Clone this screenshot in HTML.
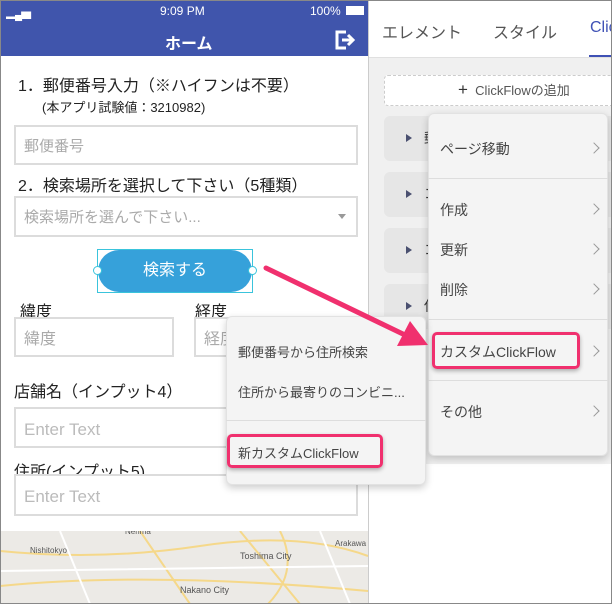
<!DOCTYPE html>
<html><head><meta charset="utf-8"><style>
*{box-sizing:border-box;margin:0;padding:0}
body{width:612px;height:604px;position:relative;overflow:hidden;background:#fff;font-family:"Liberation Sans","Noto Sans CJK JP",sans-serif;color:#222}
.a{position:absolute}
.inp{position:absolute;border:2px solid #dcdcdc;background:#fff;color:#aaa;font-size:15px;padding-left:8px;display:flex;align-items:center}
.lbl{position:absolute;font-size:15px;color:#222}
.row{position:absolute;left:384px;width:240px;height:45px;background:#e6e6e6;border-radius:6px;font-size:14px;color:#333;padding:12px 0 0 26px}
.row:before{content:"";position:absolute;left:22px;top:18px;border-left:6px solid #4a5070;border-top:4px solid transparent;border-bottom:4px solid transparent}
.row span{position:absolute;left:40px;top:12px}
.mi{position:absolute;font-size:14px;color:#444}
.chev{position:absolute;width:8px;height:8px;border-right:1.3px solid #999;border-top:1.3px solid #999;transform:rotate(45deg)}
.sep{position:absolute;height:1px;background:#ddd}
.pink{position:absolute;border:3px solid #f0306e;border-radius:5px;box-shadow:0 2px 4px rgba(0,0,0,.3)}
</style></head><body>
<div class="a" style="left:0;top:0;width:368px;height:56px;background:#4055ac"></div>
<div class="a" style="left:6px;top:6px;color:#fff;font-size:10px;letter-spacing:-1px">▂▄▆</div>
<div class="a" style="left:160px;top:4px;color:#fff;font-size:12px">9:09 PM</div>
<div class="a" style="left:310px;top:4px;color:#fff;font-size:12px">100%</div>
<div class="a" style="left:346px;top:6px;width:18px;height:9px;border:1px solid #fff;background:#fff"></div>
<div class="a" style="left:165px;top:30px;color:#fff;font-size:16px;font-weight:bold">ホーム</div>
<svg class="a" style="left:334px;top:29px" width="22" height="22" viewBox="0 0 22 22"><path d="M12 3H3v16h9" fill="none" stroke="#fff" stroke-width="3"/><path d="M8 11h9M14 6l5 5-5 5" fill="none" stroke="#fff" stroke-width="3"/></svg>
<div class="lbl" style="left:18px;top:72px;font-size:16px">1．郵便番号入力（※ハイフンは不要）</div>
<div class="a" style="left:42px;top:97px;font-size:13px">(本アプリ試験値：3210982)</div>
<div class="inp" style="left:14px;top:125px;width:344px;height:40px">郵便番号</div>
<div class="lbl" style="left:18px;top:172px;font-size:16px">2．検索場所を選択して下さい（5種類）</div>
<div class="inp" style="left:14px;top:196px;width:344px;height:41px">検索場所を選んで下さい...</div>
<div class="a" style="left:338px;top:214px;border-top:5px solid #999;border-left:4px solid transparent;border-right:4px solid transparent"></div>
<div class="a" style="left:97px;top:249px;width:156px;height:44px;border:1px solid #3ac4dc"></div>
<div class="a" style="left:98px;top:250px;width:154px;height:42px;background:#36a1da;border-radius:21px;color:#fff;font-size:16px;text-align:center;line-height:42px">検索する</div>
<div class="a" style="left:93px;top:266px;width:9px;height:9px;border-radius:50%;border:1px solid #3ac4dc;background:#fff"></div>
<div class="a" style="left:248px;top:266px;width:9px;height:9px;border-radius:50%;border:1px solid #3ac4dc;background:#fff"></div>
<div class="lbl" style="left:20px;top:298px;font-size:16px">緯度</div>
<div class="lbl" style="left:195px;top:298px;font-size:16px">経度</div>
<div class="inp" style="left:14px;top:317px;width:160px;height:40px;font-size:16px">緯度</div>
<div class="inp" style="left:194px;top:317px;width:164px;height:40px;font-size:16px">経度</div>
<div class="lbl" style="left:14px;top:378px;font-size:16px">店舗名（インプット4）</div>
<div class="inp" style="left:14px;top:407px;width:344px;height:41px;font-size:17px;color:#bbb;padding-top:4px">Enter Text</div>
<div class="lbl" style="left:14px;top:458px;font-size:16px">住所(インプット5)</div>
<div class="inp" style="left:14px;top:474px;width:344px;height:42px;font-size:17px;color:#bbb;padding-top:4px">Enter Text</div>
<svg class="a" style="left:0;top:531px" width="368" height="73"><rect width="368" height="73" fill="#eceae6"/><path d="M0 20 Q100 30 200 15 T368 25M140 0 L190 73M240 0 L300 73M0 55 Q150 40 368 60M280 0 Q300 40 268 73" stroke="#f5d88a" stroke-width="2" fill="none"/><path d="M0 40 L368 35M60 0 L90 73M320 0 L350 73" stroke="#fff" stroke-width="2" fill="none"/><text x="30" y="22" font-size="8" fill="#555">Nishitokyo</text><text x="240" y="28" font-size="9" fill="#555">Toshima City</text><text x="180" y="62" font-size="9" fill="#555">Nakano City</text><text x="335" y="15" font-size="8" fill="#555">Arakawa</text><text x="125" y="3" font-size="8" fill="#555">Nerima</text></svg>
<div class="a" style="left:368px;top:0;width:1px;height:604px;background:#ccc"></div>
<div class="a" style="left:382px;top:19px;font-size:16px;color:#555">エレメント</div>
<div class="a" style="left:493px;top:19px;font-size:16px;color:#555">スタイル</div>
<div class="a" style="left:590px;top:19px;font-size:16px;color:#3f51b5">Clic</div>
<div class="a" style="left:589px;top:55px;width:23px;height:2px;background:#3f51b5"></div>
<div class="a" style="left:369px;top:57px;width:243px;height:1px;background:#e0e0e0"></div>
<div class="a" style="left:369px;top:58px;width:243px;height:406px;background:#f0f0f0"></div>
<div class="a" style="left:384px;top:75px;width:240px;height:31px;background:#fff;border:1px dashed #ccc;border-radius:4px"></div>
<div class="a" style="left:458px;top:80px;font-size:13px;color:#555"><b style="font-size:17px;color:#333;font-weight:normal">+</b>&nbsp; ClickFlowの追加</div>
<div class="row" style="top:116px"><span>郵便番号</span></div>
<div class="row" style="top:172px"><span>コンビニ</span></div>
<div class="row" style="top:228px"><span>コンビニ</span></div>
<div class="row" style="top:284px"><span>住所</span></div>
<div class="a" style="left:430px;top:432px;font-size:13px;color:#334">エンティティの作成</div>
<div class="a" style="left:428px;top:113px;width:180px;height:343px;background:#f4f4f4;border-radius:6px;box-shadow:0 3px 8px rgba(0,0,0,.2);border:1px solid #e2e2e2"></div>
<div class="mi" style="left:440px;top:139px">ページ移動</div><div class="chev" style="left:590px;top:144px"></div>
<div class="sep" style="left:428px;top:178px;width:180px"></div>
<div class="mi" style="left:440px;top:200px">作成</div><div class="chev" style="left:590px;top:205px"></div>
<div class="mi" style="left:440px;top:240px">更新</div><div class="chev" style="left:590px;top:245px"></div>
<div class="mi" style="left:440px;top:280px">削除</div><div class="chev" style="left:590px;top:285px"></div>
<div class="sep" style="left:428px;top:319px;width:180px"></div>
<div class="mi" style="left:440px;top:342px">カスタムClickFlow</div><div class="chev" style="left:590px;top:347px"></div>
<div class="pink" style="left:432px;top:332px;width:148px;height:37px"></div>
<div class="sep" style="left:428px;top:380px;width:180px"></div>
<div class="mi" style="left:440px;top:402px">その他</div><div class="chev" style="left:590px;top:407px"></div>
<div class="a" style="left:226px;top:316px;width:200px;height:169px;background:#f4f4f4;border-radius:6px;box-shadow:0 3px 8px rgba(0,0,0,.2);border:1px solid #e2e2e2"></div>
<div class="mi" style="left:238px;top:342px;font-size:13px">郵便番号から住所検索</div>
<div class="mi" style="left:238px;top:382px;font-size:13px">住所から最寄りのコンビニ...</div>
<div class="sep" style="left:226px;top:420px;width:200px"></div>
<div class="mi" style="left:238px;top:443px;font-size:13px">新カスタムClickFlow</div>
<div class="pink" style="left:227px;top:434px;width:156px;height:34px"></div>
<svg class="a" style="left:0;top:0" width="612" height="604"><line x1="266" y1="268" x2="405" y2="335" stroke="#f0306e" stroke-width="5" stroke-linecap="round"/><path d="M428 345 L397 346 L410 321 Z" fill="#f0306e"/></svg>
<div class="a" style="left:0;top:0;width:612px;height:604px;border:1px solid #888"></div>
</body></html>
